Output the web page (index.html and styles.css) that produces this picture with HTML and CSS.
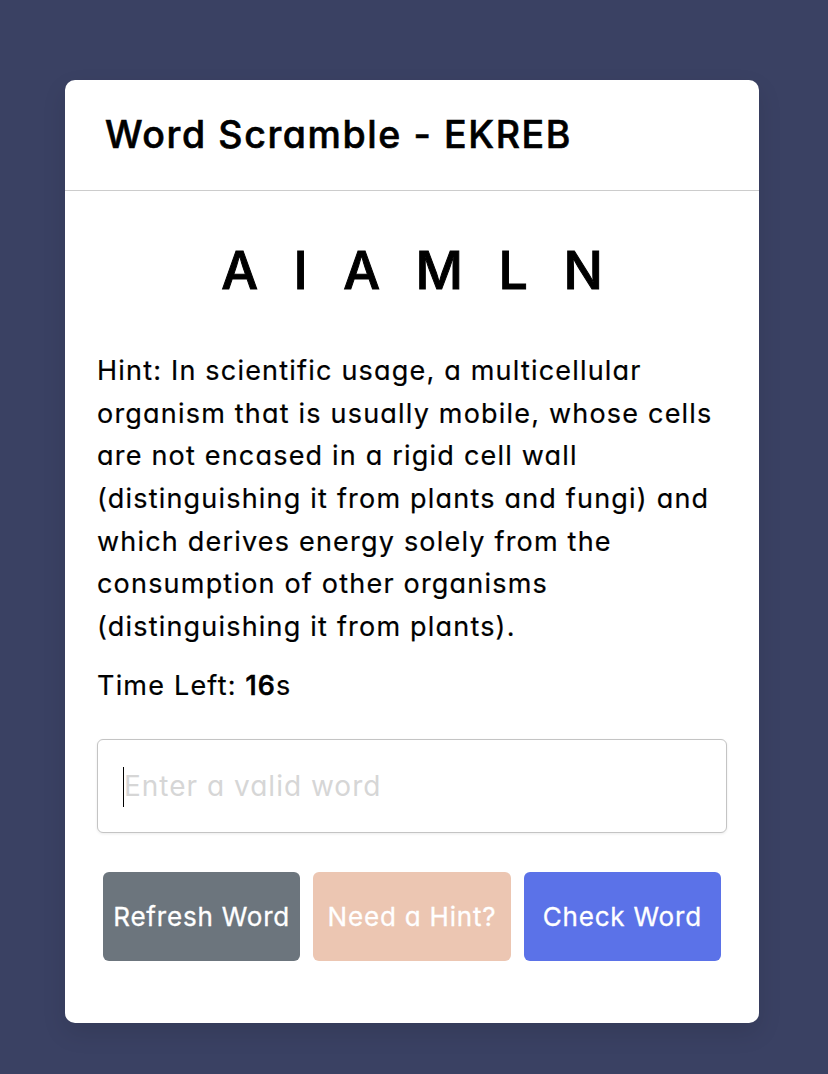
FILE: index.html
```html
<!DOCTYPE html>
<html lang="en">
<head>
<meta charset="utf-8">
<title>Word Scramble</title>
<link rel="stylesheet" href="styles.css">
</head>
<body>
<div class="container">
  <h2 class="title">Word Scramble - EKREB</h2>
  <div class="content">
    <p class="word">AIAMLN</p>
    <div class="details">
      <p class="hint">Hint: In scientific usage, a multicellular organism that is usually mobile, whose cells are not encased in a rigid cell wall (distinguishing it from plants and fungi) and which derives energy solely from the consumption of other organisms (distinguishing it from plants).</p>
      <p class="time">Time Left: <b>16</b>s</p>
    </div>
    <div class="field"><span class="caret"></span><input type="text" spellcheck="false" placeholder="Enter a valid word"></div>
    <div class="buttons">
      <button class="refresh-word">Refresh Word</button>
      <button class="hint-btn">Need a Hint?</button>
      <button class="check-word">Check Word</button>
    </div>
  </div>
</div>
</body>
</html>
```

FILE: styles.css
```css
* {
  margin: 0;
  padding: 0;
  box-sizing: border-box;
}
body {
  font-family: "Inter", "Open Sans", sans-serif;
  font-feature-settings: "cv11";
  background: #3a4163;
  min-height: 100vh;
  padding: 80px 4px 0 0;
}
.container {
  width: 694px;
  margin: 0 auto;
  background: #fff;
  border-radius: 10px;
  box-shadow: 0 10px 24px rgba(0, 0, 0, 0.1);
}
.title {
  font-size: 37.5px;
  font-weight: 500;
  letter-spacing: 1.6px;
  line-height: 58px;
  padding: 26px 40px;
  color: #000;
  -webkit-text-stroke: 0.6px #000;
  border-bottom: 1px solid #ccc;
}
.content {
  padding: 40px 32px 62px;
}
.word {
  text-align: center;
  font-size: 52px;
  font-weight: 500;
  line-height: 80px;
  letter-spacing: 35.5px;
  margin-right: -35.5px;
  text-transform: uppercase;
  color: #000;
  -webkit-text-stroke: 1px #000;
}
.details {
  margin-top: 39px;
  color: #000;
  -webkit-text-stroke: 0.2px #000;
}
.hint {
  font-size: 27px;
  letter-spacing: 1.2px;
  line-height: 42.67px;
}
.time {
  margin-top: 16px;
  font-size: 27px;
  letter-spacing: 1.2px;
  line-height: 42.67px;
}
.time b {
  font-weight: 500;
  -webkit-text-stroke: 0.7px #000;
}
.field {
  position: relative;
  margin-top: 32px;
}
.field input {
  display: block;
  width: 100%;
  height: 94px;
  border: 1px solid #c4c4c4;
  border-radius: 6px;
  padding: 0 26px;
  font-family: inherit;
  font-feature-settings: "cv11";
  font-size: 28px;
  letter-spacing: 1px;
  outline: none;
  box-shadow: 0 1px 3px rgba(0, 0, 0, 0.08);
}
.field input::placeholder {
  color: #d6d6d6;
}
.caret {
  position: absolute;
  left: 26px;
  top: 28px;
  width: 1px;
  height: 40px;
  background: #000;
}
.buttons {
  display: flex;
  gap: 13px;
  padding: 0 6px;
  margin-top: 39px;
}
.buttons button {
  flex: 1;
  height: 89px;
  border: none;
  border-radius: 6px;
  color: #fff;
  font-family: inherit;
  font-feature-settings: "cv11";
  font-size: 26px;
  letter-spacing: 0.8px;
  -webkit-text-stroke: 0.3px #fff;
  cursor: pointer;
}
.refresh-word {
  background: #6c757d;
}
.hint-btn {
  background: #ecc6b2;
}
.check-word {
  background: #5b72e8;
}
```
